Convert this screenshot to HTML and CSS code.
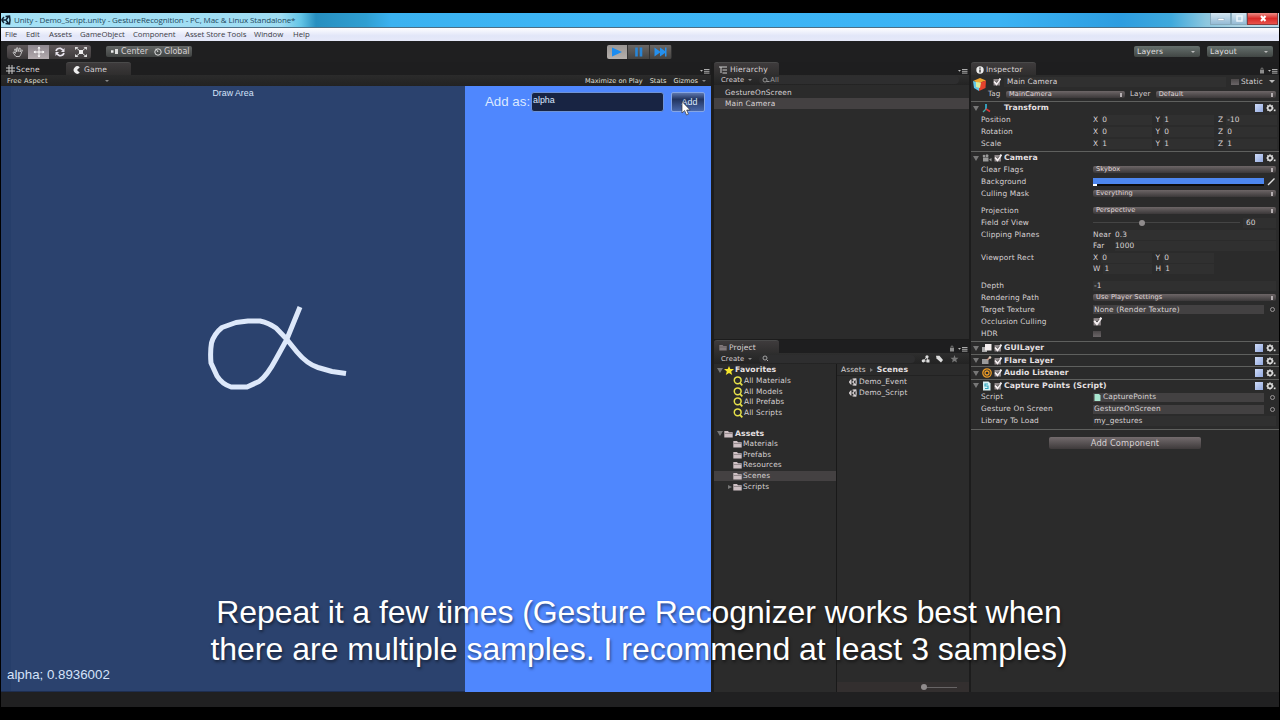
FILE: index.html
```html
<!DOCTYPE html>
<html lang="en">
<head>
  <meta charset="UTF-8">
  <title>Unity - Demo_Script.unity</title>
  <link rel="stylesheet" href="styles.css">
</head>
<body>

<!-- Icons -->
<svg class="sprite" width="0" height="0">
  <symbol id="i-unity" viewBox="0 0 10 10"><path d="M.5 5L3 2M.5 5L3 8M.5 5H5M5 5L7.500 1.500M5 5L7.500 8.500M4.500 1.500L8.500 1 9 5 8.500 9 4.500 8.500" fill="none" stroke="currentColor" stroke-width="1.500"/></symbol>
  <symbol id="i-check" viewBox="0 0 8 8"><rect x=".5" y="1" width="6.500" height="6.500" fill="#8f888a"/><path d="M1.200 3.300L3.500 6.200 7.500.6" fill="none" stroke="#f4eef0" stroke-width="2"/><path d="M2.300 3L3.600 4.500 5.500 1.800" fill="none" stroke="#333" stroke-width=".7"/></symbol>
  <symbol id="i-gear" viewBox="0 0 10 8"><circle cx="4" cy="4" r="2.300" fill="none" stroke="#ddd" stroke-width="1.600"/><path d="M4 .3V1.500M4 6.500V7.700M.3 4H1.500M6.500 4H7.700M1.400 1.400L2 2M6 2L6.600 1.400M1.400 6.600L2 6" stroke="#ddd" stroke-width="1.200"/><rect x="7.800" y="5.500" width="1.700" height="1.700" fill="#ddd"/></symbol>
  <symbol id="i-folder" viewBox="0 0 9 8"><path d="M.3 1H4L5 2.200H8.700V7.400H.3Z" fill="#cdbfc3"/><path d="M.8 3.500H8.500" stroke="#7d7376" stroke-width=".7"/></symbol>
  <symbol id="i-search" viewBox="0 0 10 10"><circle cx="4.700" cy="4.300" r="3.400" fill="none" stroke="#e6e14a" stroke-width="1.500"/><path d="M7 6.800L9.300 9.300" stroke="#e6e14a" stroke-width="1.700"/></symbol>
  <symbol id="i-menu" viewBox="0 0 10 6"><path d="M0 2H3L1.500 3.800Z" fill="#bbb"/><path d="M4 1.500H9.500M4 3.300H9.500M4 5.100H9.500" stroke="#bbb" stroke-width=".9"/></symbol>
  <symbol id="i-lock" viewBox="0 0 6 7"><rect x="1" y="3" width="4" height="3.500" fill="#8b8b8b"/><path d="M2 3V1.500Q3 .3 4 1.500V3" fill="none" stroke="#8b8b8b" stroke-width=".8"/></symbol>
</svg>

<div class="window">
  <div class="titlebar">
    <svg class="logo" width="10" height="10"><use href="#i-unity"/></svg>
    <span class="title">Unity - Demo_Script.unity - GestureRecognition - PC, Mac &amp; Linux Standalone*</span>
    <div class="win-buttons">
      <span class="win-btn"><svg width="20" height="11" viewBox="0 0 20 11"><rect x="7" y="5.500" width="6" height="2" fill="#fff" stroke="#8aa5bb" stroke-width=".5"/></svg></span>
      <span class="win-btn small"><svg width="16" height="11" viewBox="0 0 16 11"><rect x="5" y="3" width="5" height="5" fill="none" stroke="#eef6fc" stroke-width="1.500"/></svg></span>
      <span class="win-btn close"><svg width="30" height="11" viewBox="0 0 30 11"><path d="M13 3L17.500 8M17.500 3L13 8" stroke="#fff" stroke-width="2"/></svg></span>
    </div>
  </div>

  <nav class="menubar">
    <span class="m-file">File</span><span class="m-edit">Edit</span><span class="m-assets">Assets</span><span class="m-go">GameObject</span><span class="m-comp">Component</span><span class="m-store">Asset Store Tools</span><span class="m-window">Window</span><span>Help</span>
  </nav>

  <div class="toolbar">
    <div class="tools">
      <span><svg width="12" height="12" viewBox="0 0 12 12"><path d="M3.500 10L1 6.500 1.800 6 3.500 7.300 2.600 3.200 3.500 3 4.600 5.800 4.700 1.800H5.700L6.200 5.600 7.400 2 8.300 2.300 8 6 9.700 3.700 10.400 4.200 8.700 8.500 7.500 10.500H4Z" fill="none" stroke="#ddd" stroke-width=".8"/></svg></span>
      <span class="active"><svg width="12" height="12" viewBox="0 0 12 12"><path d="M6 1V11M1 6H11" stroke="#fff" stroke-width="1"/><path d="M6 .5L7.500 2.500H4.500ZM6 11.500L7.500 9.500H4.500ZM.5 6L2.500 4.500V7.500ZM11.500 6L9.500 4.500V7.500Z" fill="#fff"/></svg></span>
      <span><svg width="12" height="12" viewBox="0 0 12 12"><path d="M2 5Q3 2 6.500 2.300L9 4M10 7Q9 10 5.500 9.700L3 8" fill="none" stroke="#e8e4ee" stroke-width="1.700"/><path d="M10.500 2V6H7ZM1.500 10V6H5Z" fill="#e8e4ee"/></svg></span>
      <span><svg width="12" height="12" viewBox="0 0 12 12"><path d="M1 1.500L11 10.500M11 1.500L1 10.500" stroke="#ddd" stroke-width="1"/><path d="M0 1H3.500L0 4ZM12 1H8.500L12 4ZM0 11H3.500L0 8ZM12 11H8.500L12 8Z" fill="#ddd"/><rect x="4" y="4" width="4" height="4" fill="#eee"/></svg></span>
    </div>
    <div class="pivot">
      <span><svg width="8" height="7" viewBox="0 0 8 7"><path d="M0 3.500H2.500" stroke="#eee" stroke-width="2.500"/><path d="M4 1H7V6H4Z" fill="#ddd"/></svg>Center</span>
      <span><svg width="8" height="8" viewBox="0 0 8 8"><circle cx="4" cy="4" r="3.200" fill="none" stroke="#ddd"/><path d="M4 4L2 .8" stroke="#ddd"/></svg>Global</span>
    </div>
    <div class="play">
      <span class="on"><svg width="20" height="14" viewBox="0 0 20 14"><path d="M5 2.500L15 7 5 11.500Z" fill="#1b8cf0"/></svg></span>
      <span><svg width="21" height="14" viewBox="0 0 21 14"><path d="M8.500 2.500V11.500M13 2.500V11.500" stroke="#2886d8" stroke-width="2.600"/></svg></span>
      <span><svg width="21" height="14" viewBox="0 0 21 14"><path d="M4.500 2.500L10 6.500V2.500L15 6V2.500H16.500V11.500H15V8L10 11.500V7.500L4.500 11.500Z" fill="#2490ee"/></svg></span>
    </div>
    <div class="layouts">
      <span class="drop">Layers<i></i></span>
      <span class="drop">Layout<i></i></span>
    </div>
  </div>

  <main class="workspace">
    <section class="game">
      <div class="tabs">
        <span class="tab plain"><svg width="9" height="9" viewBox="0 0 9 9"><path d="M3 0V9M6 0V9M0 3H9M0 6H9" stroke="#ccc"/></svg>Scene</span>
        <span class="tab game-tab"><svg width="8" height="8" viewBox="0 0 8 8"><path d="M6.800 1.200A3.700 3.700 0 1 0 6.800 6.800L4 4Z" fill="#eee"/></svg>Game</span>
        <svg class="panel-menu" width="10" height="6"><use href="#i-menu"/></svg>
      </div>
      <div class="game-bar">
        <span class="aspect">Free Aspect</span><i class="caret"></i>
        <span class="max">Maximize on Play</span><span class="stats">Stats</span><span class="gizmos">Gizmos</span><i class="caret"></i>
      </div>
      <div class="view">
        <div class="draw-area">
          <p class="area-label">Draw Area</p>
          <svg class="gesture" width="150" height="92" viewBox="200 300 150 92"><path d="M300 307L286.500 340 276 359Q267 376 259 381.500L247 387H231Q222 384 217 376L211 363Q210 352 211.500 343 214 334 222 327.500L236 322.500 248 321H260Q269 323 276 328L286.500 339 297 352Q307 364 318 367.500L332 371.500 346 373.500" fill="none" stroke="#dde8fa" stroke-width="5" stroke-linejoin="round"/></svg>
          <p class="result">alpha; 0.8936002</p>
        </div>
        <div class="controls">
          <span class="add-label">Add as:</span>
          <span class="add-input">alpha</span>
          <span class="add-btn">Add
            <svg class="cursor" width="10" height="15" viewBox="0 0 10 15"><path d="M1 .5V12L3.600 9.600 5.500 14 7.500 13.200 5.700 9H9.200Z" fill="#fff" stroke="#333" stroke-width=".7"/></svg>
          </span>
        </div>
      </div>
    </section>

    <div class="middle">
      <section class="hierarchy">
        <div class="tabs">
          <span class="tab"><svg width="9" height="8" viewBox="0 0 9 8"><path d="M0 1H8M3.500 4H8M3.500 7H8M2 1V7" stroke="#ccc"/></svg>Hierarchy</span>
          <svg class="panel-menu" width="10" height="6"><use href="#i-menu"/></svg>
        </div>
        <div class="search-bar"><span>Create</span><i class="caret"></i><span class="search"><svg width="8" height="7" viewBox="0 0 8 7"><circle cx="3" cy="3" r="2" fill="none" stroke="#999" stroke-width=".9"/><path d="M4.500 4.500H7.500" stroke="#999"/></svg>All</span></div>
        <div class="objects">
          <div>GestureOnScreen</div>
          <div class="selected">Main Camera</div>
        </div>
      </section>

      <section class="project">
        <div class="tabs">
          <span class="tab"><svg class="dim" width="8" height="7"><use href="#i-folder"/></svg>Project</span>
          <svg class="panel-menu lock" width="6" height="7"><use href="#i-lock"/></svg>
          <svg width="10" height="6"><use href="#i-menu"/></svg>
        </div>
        <div class="search-bar"><span>Create</span><i class="caret"></i><span class="search"><svg width="8" height="7" viewBox="0 0 8 7"><circle cx="3" cy="3" r="2" fill="none" stroke="#aaa" stroke-width=".9"/><path d="M4.500 4.500L6 6" stroke="#aaa"/></svg></span>
          <svg class="filters" width="38" height="8" viewBox="0 0 38 8"><path d="M5.800 1.800L2.500 6H7Z" fill="none" stroke="#ddd" stroke-width=".8"/><circle cx="6" cy="1.800" r="1.600" fill="#ddd"/><circle cx="2.300" cy="5.800" r="1.600" fill="#ddd"/><rect x="5.500" y="4.500" width="3" height="3" fill="#ddd"/><path d="M15 .7H18.500L22 5 20 7.600 15.500 3.500Z" fill="#ddd"/><path d="M33.500 0L34.500 2.800H37.500L35.200 4.700 36 7.600 33.500 6 31 7.600 31.800 4.700 29.500 2.800H32.500Z" fill="#777"/></svg>
        </div>
        <div class="browser">
          <div class="tree">
            <div class="node root"><i class="fold"></i><svg width="10" height="9" viewBox="0 0 10 9"><path d="M5 0L6.300 3.100H10L7.200 5.400 8.200 9 5 6.900 1.800 9 2.800 5.400 0 3.100H3.700Z" fill="#f5e52c"/></svg><b>Favorites</b></div>
            <div class="node"><svg width="10" height="10"><use href="#i-search"/></svg>All Materials</div>
            <div class="node"><svg width="10" height="10"><use href="#i-search"/></svg>All Models</div>
            <div class="node"><svg width="10" height="10"><use href="#i-search"/></svg>All Prefabs</div>
            <div class="node"><svg width="10" height="10"><use href="#i-search"/></svg>All Scripts</div>
            <div class="node root assets"><i class="fold"></i><svg width="9" height="8"><use href="#i-folder"/></svg><b>Assets</b></div>
            <div class="node"><svg width="9" height="8"><use href="#i-folder"/></svg>Materials</div>
            <div class="node"><svg width="9" height="8"><use href="#i-folder"/></svg>Prefabs</div>
            <div class="node"><svg width="9" height="8"><use href="#i-folder"/></svg>Resources</div>
            <div class="node selected"><svg width="9" height="8"><use href="#i-folder"/></svg>Scenes</div>
            <div class="node closed"><i class="fold right"></i><svg width="9" height="8"><use href="#i-folder"/></svg>Scripts</div>
          </div>
          <div class="files">
            <div class="crumbs">Assets<i class="fold right"></i><b>Scenes</b></div>
            <div class="file"><svg width="8" height="8"><use href="#i-unity"/></svg>Demo_Event</div>
            <div class="file"><svg width="8" height="8"><use href="#i-unity"/></svg>Demo_Script</div>
            <div class="zoom-bar"><span class="zoom"><i class="knob"></i></span></div>
          </div>
        </div>
      </section>
    </div>

    <section class="inspector">
      <div class="tabs">
        <span class="tab"><svg width="8" height="8" viewBox="0 0 8 8"><circle cx="4" cy="4" r="3.700" fill="#eee"/><path d="M4 1.500V2.700M4 3.500V6.500" stroke="#222" stroke-width="1.300"/></svg>Inspector</span>
        <svg class="panel-menu lock" width="6" height="7"><use href="#i-lock"/></svg>
        <svg width="10" height="6"><use href="#i-menu"/></svg>
      </div>
      <div class="object-head">
        <svg class="cube" width="14" height="14" viewBox="0 0 14 14"><path d="M0 3L7 0 13 2.500 6 5Z" fill="#f0a52e"/><path d="M0 3L6 5V13L1 10Z" fill="#62c8e8"/><path d="M6 5L13 2.500 12.500 10 6 13Z" fill="#e4432c"/><path d="M3 4L8 4.500 7 10 3 9Z" fill="#d9ec9c"/></svg>
        <div class="object-rows">
          <div class="name-row"><svg width="8" height="8"><use href="#i-check"/></svg><span class="object-name">Main Camera</span><i class="box"></i><span>Static</span><i class="caret big"></i></div>
          <div class="tag-row"><span class="tag-label">Tag</span><span class="select tag-select">MainCamera</span><span class="layer-label">Layer</span><span class="select layer-select">Default</span></div>
        </div>
      </div>

      <div class="component">
        <div class="head"><i class="fold"></i><svg width="10" height="9" viewBox="0 0 10 9"><path d="M4 0V5" stroke="#39c2e8" stroke-width="1.500"/><path d="M4 5L1 8" stroke="#4aa" stroke-width="1.300"/><path d="M4 5L8 7.500" stroke="#d33" stroke-width="1.500"/></svg><b class="no-check">Transform</b><i class="book"></i><svg width="10" height="8"><use href="#i-gear"/></svg></div>
        <div class="row"><label>Position</label><div class="vec"><span>X<em>0</em></span><span>Y<em>1</em></span><span>Z<em>-10</em></span></div></div>
        <div class="row"><label>Rotation</label><div class="vec"><span>X<em>0</em></span><span>Y<em>0</em></span><span>Z<em>0</em></span></div></div>
        <div class="row"><label>Scale</label><div class="vec"><span>X<em>1</em></span><span>Y<em>1</em></span><span>Z<em>1</em></span></div></div>
      </div>

      <div class="component camera">
        <div class="head"><i class="fold"></i><svg width="10" height="8" viewBox="0 0 10 8"><path d="M1 3.500H6.500V7.500H1Z" fill="#999"/><circle cx="2" cy="2" r="1.300" fill="#999"/><circle cx="5" cy="1.700" r="1.500" fill="#999"/><path d="M7 5.500L9.500 4V7.500Z" fill="#999"/></svg><svg width="8" height="8"><use href="#i-check"/></svg><b>Camera</b><i class="book"></i><svg width="10" height="8"><use href="#i-gear"/></svg></div>
        <div class="row"><label>Clear Flags</label><span class="select">Skybox</span></div>
        <div class="row"><label>Background</label><span class="color"><i></i></span><svg width="8" height="8" viewBox="0 0 8 8"><path d="M1 7L7.500.5" stroke="#ddd" stroke-width="1.300"/></svg></div>
        <div class="row"><label>Culling Mask</label><span class="select">Everything</span></div>
        <div class="row gap-top"><label>Projection</label><span class="select">Perspective</span></div>
        <div class="row"><label>Field of View</label><span class="slider"><i class="knob"></i></span><span class="fov">60</span></div>
        <div class="row"><label>Clipping Planes</label><span class="clip">Near<em>0.3</em></span></div>
        <div class="row short"><label></label><span class="clip">Far<em>1000</em></span></div>
        <div class="row"><label>Viewport Rect</label><div class="vec"><span>X<em>0</em></span><span>Y<em>0</em></span></div></div>
        <div class="row short"><label></label><div class="vec"><span>W<em>1</em></span><span>H<em>1</em></span></div></div>
        <div class="row gap-top"><label>Depth</label><span class="field">-1</span></div>
        <div class="row"><label>Rendering Path</label><span class="select">Use Player Settings</span></div>
        <div class="row"><label>Target Texture</label><span class="object-field">None (Render Texture)</span><i class="ring"></i></div>
        <div class="row"><label>Occlusion Culling</label><svg width="9" height="9"><use href="#i-check"/></svg></div>
        <div class="row"><label>HDR</label><i class="box"></i></div>
      </div>

      <div class="component">
        <div class="head"><i class="fold"></i><svg width="10" height="9" viewBox="0 0 10 9"><rect x="0" y="3" width="5" height="5" fill="#aaa"/><rect x="3" y="0" width="6.500" height="6.500" fill="#f4eeee"/></svg><svg width="8" height="8"><use href="#i-check"/></svg><b>GUILayer</b><i class="book"></i><svg width="10" height="8"><use href="#i-gear"/></svg></div>
      </div>
      <div class="component">
        <div class="head"><i class="fold"></i><svg width="10" height="9" viewBox="0 0 10 9"><rect x="0" y="3" width="6.500" height="5" fill="#9a9a9a"/><path d="M5 4L8 1.500" stroke="#c98" stroke-width="1.500"/><circle cx="8" cy="1.500" r="1.300" fill="#dcb"/></svg><svg width="8" height="8"><use href="#i-check"/></svg><b>Flare Layer</b><i class="book"></i><svg width="10" height="8"><use href="#i-gear"/></svg></div>
      </div>
      <div class="component">
        <div class="head"><i class="fold"></i><svg width="10" height="10" viewBox="0 0 10 10"><circle cx="5" cy="5" r="4.200" fill="none" stroke="#eb9a25" stroke-width="1.300"/><circle cx="5" cy="5" r="2" fill="none" stroke="#eb9a25" stroke-width="1.300"/></svg><svg width="8" height="8"><use href="#i-check"/></svg><b>Audio Listener</b><i class="book"></i><svg width="10" height="8"><use href="#i-gear"/></svg></div>
      </div>
      <div class="component last">
        <div class="head"><i class="fold"></i><svg width="10" height="10" viewBox="0 0 10 10"><path d="M1 .5H6.500L8.500 2.500V9.500H1Z" fill="#d8f0f4"/><path d="M6 3H3V5H6V7.500H3" fill="none" stroke="#2ea5bd" stroke-width="1.100"/></svg><svg width="8" height="8"><use href="#i-check"/></svg><b>Capture Points (Script)</b><i class="book"></i><svg width="10" height="8"><use href="#i-gear"/></svg></div>
        <div class="row"><label>Script</label><span class="object-field"><svg width="7" height="7" viewBox="0 0 7 7"><path d="M.5 0H5L6.500 1.500V7H.5Z" fill="#a8e6cf"/></svg>CapturePoints</span><i class="ring"></i></div>
        <div class="row"><label>Gesture On Screen</label><span class="object-field">GestureOnScreen</span><i class="ring"></i></div>
        <div class="row"><label>Library To Load</label><span class="field">my_gestures</span></div>
      </div>

      <div class="add-component">Add Component</div>
    </section>
  </main>

  <div class="statusbar"></div>
</div>

<p class="caption"><span class="line-1">Repeat it a few times (Gesture Recognizer works best when</span><br><span class="line-2">there are multiple samples. I recommend at least 3 samples)</span></p>

</body>
</html>
```
FILE: styles.css
```css
:root {
  --panel: #2b2b2b;
  --chrome: #1f1f20;
  --text: #d8d2d4;
  --field: #303030;
  --line: #5f605e;
}

* {
  margin: 0;
  padding: 0;
  box-sizing: border-box;
}

body {
  width: 1280px;
  height: 720px;
  overflow: hidden;
  background: #000;
  color: var(--text);
  font-family: "DejaVu Sans", Verdana, sans-serif;
  font-size: 7.4px;
  line-height: 10px;
  letter-spacing: 0.12px;
  white-space: nowrap;
}

svg {
  flex: none;
  display: block;
}

.sprite {
  position: absolute;
}

i, em {
  font-style: normal;
  flex: none;
}

.window {
  margin: 0 1px;
  padding-top: 13px;
  height: 707px;
  width: 1278px;
  display: flex;
  flex-direction: column;
}

/* Title and menu */
.titlebar {
  height: 15px;
  flex: none;
  display: flex;
  align-items: center;
  border-bottom: 1px solid #4c6f86;
  background: linear-gradient(90deg, #a5e2f6 0, #9edcf2 280px, #62c4e6 300px, #278fc0 315px, #2f9fd2 365px, #3bb2f0 390px, #3eb6f6 600px, #3bb3f4 1000px, #2d9de0 1120px, #3fa9dc 1170px, #8cc7df 1205px, #b9d9e6 1250px);
  color: #24495c;
  font: 8px/12px "Open Sans", sans-serif;
}

.logo {
  color: #123;
}

.title {
  margin-left: 3px;
  letter-spacing: -0.11px;
}

.win-buttons {
  margin-left: auto;
  align-self: flex-start;
  display: flex;
  margin-right: 1px;
}

.win-btn {
  width: 21px;
  height: 12px;
  border: 1px solid #87aabd;
  border-top: none;
  background: linear-gradient(#d4e6f1, #96bcd6);
}

.win-btn.small {
  width: 16px;
}

.win-btn.close {
  width: 31px;
  border-color: #8d3b3b;
  background: linear-gradient(#ec8d86, #d92a27 50%, #e8534b);
}

.menubar {
  height: 13px;
  flex: none;
  display: flex;
  align-items: center;
  padding-left: 4px;
  background: linear-gradient(#fdfdff, #e2e6f8 60%, #e6e9f9);
  color: #3d3d46;
  font: 7.8px/13px "Open Sans", sans-serif;
  letter-spacing: -0.05px;
}

.m-file { width: 21px; }
.m-edit { width: 23px; }
.m-assets { width: 31px; }
.m-go { width: 53px; }
.m-comp { width: 52px; }
.m-store { width: 69px; }
.m-window { width: 39px; }

/* Toolbar */
.toolbar {
  height: 21px;
  flex: none;
  display: flex;
  align-items: center;
  padding-left: 6px;
  background: var(--chrome);
}

.tools {
  display: flex;
  border-radius: 3px;
  overflow: hidden;
}

.tools span {
  width: 21px;
  height: 14px;
  display: flex;
  align-items: center;
  justify-content: center;
  background: linear-gradient(#5e5759, #3c393a);
}

.tools .active {
  background: linear-gradient(#8d868e, #b3abae);
}

.pivot {
  display: flex;
  margin-left: 15px;
  height: 11px;
  border-radius: 2px;
  background: linear-gradient(#636665, #404342);
  font-size: 8px;
  letter-spacing: 0;
  line-height: 11px;
}

.pivot span {
  display: flex;
  align-items: center;
  gap: 2px;
  width: 43px;
  padding-left: 5px;
}

.play {
  display: flex;
  margin-left: 415px;
  border-radius: 2px;
  overflow: hidden;
}

.play span {
  background: linear-gradient(#6a6664, #454341);
  border-right: 1px solid #333;
}

.play .on {
  background: linear-gradient(#9a9694, #b5b0ac);
}

.layouts {
  margin-left: auto;
  display: flex;
  gap: 7px;
  padding-right: 6px;
}

.drop {
  display: flex;
  align-items: center;
  justify-content: space-between;
  width: 66px;
  height: 11px;
  padding: 0 5px 0 3px;
  border-radius: 2px;
  background: linear-gradient(#66706d, #414644);
  color: #ddd;
  font-size: 7.7px;
}

.drop i, .caret {
  border: 2px solid transparent;
  border-top: 2.500px solid #bbb;
  border-bottom: none;
}

.caret {
  border-width: 2px 2px 0;
  border-top-color: #888;
}

/* Panels */
.workspace {
  flex: 1;
  display: flex;
  min-height: 0;
  background: #1c1c1c;
}

.tabs {
  height: 13px;
  flex: none;
  display: flex;
  align-items: center;
  background: #1e1e1f;
  font-size: 7.6px;
  padding-right: 1px;
}

.tab {
  display: flex;
  align-items: center;
  gap: 2px;
  height: 13px;
  width: 65px;
  padding-left: 5px;
  padding-top: 1px;
  border-top: 1px solid #4a4a4a;
  border-radius: 3px 3px 0 0;
  background: linear-gradient(#3e3b3c, #2f2e2e);
}

.tab.plain {
  background: none;
  border-color: transparent;
  gap: 1px;
}

.panel-menu {
  margin: 4px 0 0 auto;
}

.panel-menu + svg {
  margin: 4px 0 0 3px;
}

.game {
  width: 710px;
  display: flex;
  flex-direction: column;
}

.game-tab {
  gap: 3px;
  padding-left: 7px;
}

.game-bar {
  height: 11px;
  flex: none;
  display: flex;
  align-items: center;
  padding: 0 5px 0 6px;
  background: linear-gradient(#2b2b2b, #222);
  font-size: 6.6px;
  letter-spacing: 0.02px;
  color: #e2e0d8;
}

.aspect {
  letter-spacing: 0.2px;
}

.game-bar .caret:nth-child(2) {
  margin-left: 57px;
}

.max { margin-left: auto; }
.stats { margin-left: 7px; }
.gizmos { margin: 0 4px 0 7px; }

.view {
  flex: 1;
  display: flex;
}

.draw-area {
  width: 464px;
  display: flex;
  flex-direction: column;
  background: linear-gradient(90deg, #263e6a 10px, #2b426e 10px);
  border-bottom: 1px solid #1e2e50;
  color: #d5e3fa;
  font-family: "Liberation Sans", Arial, sans-serif;
  letter-spacing: 0;
}

.area-label {
  margin-top: 2px;
  text-align: center;
  font-size: 8.8px;
}

.gesture {
  margin: 202px 0 0 199px;
}

.result {
  margin: auto 0 7px 6px;
  font-size: 13.3px;
  line-height: 18px;
}

.controls {
  flex: 1;
  display: flex;
  align-items: flex-start;
  padding: 6px 6px 0 20px;
  background: #4f87fe;
  color: #dce9ff;
  font-family: "Liberation Sans", Arial, sans-serif;
  letter-spacing: 0;
}

.add-label {
  width: 46px;
  font-size: 13.3px;
  line-height: 19px;
}

.add-input {
  width: 133px;
  height: 20px;
  padding: 2px 1px;
  border: 1px solid #6f93d6;
  border-radius: 3px;
  background: #182443;
  font-size: 8.9px;
}

.add-btn {
  position: relative;
  width: 34px;
  height: 20px;
  margin-left: 7px;
  padding-left: 3px;
  border: 1px solid #86a6e4;
  border-radius: 2px;
  background: linear-gradient(#5d76ad, #22345f 35%, #4968aa);
  text-align: center;
  font-size: 8.9px;
  line-height: 19px;
}

.cursor {
  position: absolute;
  left: 9px;
  top: 8px;
}

/* Hierarchy and project */
.middle {
  width: 255px;
  margin-left: 3px;
  display: flex;
  flex-direction: column;
}

.hierarchy {
  height: 277px;
  background: var(--panel);
}

.search-bar {
  height: 11px;
  display: flex;
  align-items: center;
  padding-left: 7px;
  background: linear-gradient(#2e2e2e, #232323);
  font-size: 6.8px;
}

.search-bar .caret {
  margin: 0 7px 0 4px;
}

.hierarchy .search-bar {
  height: 10px;
}

.search {
  display: flex;
  align-items: center;
  width: 200px;
  height: 8px;
  padding-left: 3px;
  border-radius: 4px;
  background: #2e2e2f;
  color: #999;
}

.objects {
  padding-top: 2px;
  line-height: 11px;
}

.objects div {
  padding-left: 11px;
}

.selected {
  background: #444142;
}

.project {
  flex: 1;
  margin-top: 1px;
  display: flex;
  flex-direction: column;
  background: var(--panel);
}

.dim {
  opacity: 0.5;
}

.project .search {
  width: 156px;
}

.filters {
  margin-left: 6px;
}

.browser {
  flex: 1;
  display: flex;
}

.tree {
  width: 123px;
  padding-top: 1px;
  border-right: 1px solid #191919;
}

.node {
  display: flex;
  align-items: center;
  gap: 1px;
  height: 10.650px;
  padding-left: 19px;
}

.node.root {
  padding-left: 3px;
  font-size: 7.7px;
}

.node.assets {
  margin-top: 10px;
}

.node.assets b {
  margin-left: 1px;
}

.node.closed {
  padding-left: 14px;
}

b {
  color: #e6e0e2;
}

.fold {
  border: 3px solid transparent;
  border-top: 5px solid #777;
  border-bottom: none;
}

.fold.right {
  border: 2.500px solid transparent;
  border-left: 4px solid #777;
  border-right: none;
}

.files {
  flex: 1;
  display: flex;
  flex-direction: column;
}

.crumbs {
  display: flex;
  align-items: center;
  height: 12px;
  padding-left: 4px;
  border-bottom: 1px solid #222;
}

.crumbs .fold {
  margin: 0 4px;
  border-width: 2px 0 2px 3px;
}

.crumbs b {
  font-size: 7.7px;
}

.file {
  display: flex;
  align-items: center;
  gap: 2px;
  height: 10.700px;
  padding-left: 12px;
}

.crumbs + .file {
  margin-top: 1px;
}

.zoom-bar {
  margin-top: auto;
  height: 10px;
  display: flex;
  align-items: center;
  justify-content: flex-end;
  padding-right: 12px;
  background: #332f2f;
}

.zoom {
  display: flex;
  align-items: center;
  width: 36px;
  height: 1px;
  background: #676465;
}

.knob {
  width: 6px;
  height: 6px;
  border-radius: 3px;
  background: #8f8b8c;
}

/* Inspector */
.inspector {
  width: 308px;
  margin-left: 2px;
  background: var(--panel);
}

.object-head {
  display: flex;
  height: 26px;
  padding: 0 3px 0 2px;
}

.cube {
  margin-top: 3px;
}

.object-rows {
  flex: 1;
}

.name-row, .tag-row {
  display: flex;
  align-items: center;
  height: 13px;
}

.name-row {
  padding-left: 6px;
}

.object-name {
  width: 222px;
  margin: 0 5px 0 3px;
  padding-left: 3px;
  background: var(--field);
}

.box {
  width: 8px;
  height: 6px;
  background: linear-gradient(#4c4849, #6a6567);
}

.name-row .box {
  margin-right: 2px;
}

.caret.big {
  margin-left: 6px;
  border-width: 3px 3px 0;
  border-top-color: #bbb;
}

.tag-row {
  height: 12px;
  padding-left: 1px;
  font-size: 7.2px;
}

.tag-label {
  width: 18px;
}

.select {
  position: relative;
  flex: 1;
  height: 7px;
  padding-left: 3px;
  border-radius: 2px;
  background: linear-gradient(#6d6667, #3b3839);
  color: #e0dadc;
  font-size: 6.6px;
  line-height: 7px;
}

.select::after {
  content: "";
  position: absolute;
  right: 3px;
  top: 2px;
  width: 2px;
  height: 4px;
  background: #b5afb1;
}

.tag-select {
  flex: none;
  width: 119px;
}

.layer-label {
  margin: 0 5px;
}

.component {
  border-top: 1px solid var(--line);
  padding-bottom: 1.500px;
}

.component.camera {
  padding-bottom: 1.300px;
}

.component.camera ~ .component {
  padding-bottom: 0;
}

.component.camera ~ .last {
  padding-bottom: 1.500px;
  border-bottom: 1px solid var(--line);
}

.head {
  display: flex;
  align-items: center;
  gap: 2px;
  height: 11.500px;
  padding: 1px 3px 0 2px;
  font-size: 7.7px;
}

.head .fold + svg {
  margin-left: 1px;
}

.head .no-check {
  margin-left: 10px;
}

.book {
  width: 8px;
  height: 8px;
  margin-left: auto;
  margin-right: 1px;
  background: linear-gradient(135deg, #cfdcf8, #93a9df);
}

.row {
  display: flex;
  align-items: center;
  height: 12px;
  padding: 0 3px 0 10px;
}

.row.short {
  height: 11px;
}

.row.gap-top {
  margin-top: 5.200px;
}

.row label {
  width: 112px;
  flex: none;
}

.vec {
  display: flex;
  flex: 1;
  gap: 4px;
}

.vec span {
  display: flex;
  width: 58.500px;
}

.vec em {
  flex: 1;
  margin-left: 3px;
  padding-left: 1px;
  background: var(--field);
}

.color {
  width: 171px;
  height: 8px;
  margin-right: 3px;
  background: linear-gradient(#4d86ee 6px, #0c0c0c 6px);
  padding-top: 6px;
}

.color i {
  display: block;
  width: 4px;
  height: 2px;
  background: #fff;
}

.slider {
  display: flex;
  align-items: center;
  width: 147px;
  height: 1px;
  padding-left: 46px;
  background: #444;
}

.fov {
  margin-left: 3px;
  padding-left: 3px;
  flex: 1;
  background: var(--field);
}

.clip {
  display: grid;
  flex: 1;
  grid-template-columns: 22px 1fr;
}

.clip em {
  background: var(--field);
}

.field {
  flex: 1;
  padding-left: 1px;
  background: var(--field);
}

.object-field {
  display: flex;
  align-items: center;
  gap: 2px;
  width: 171px;
  height: 9px;
  padding-left: 1px;
  background: #434142;
}

.ring {
  width: 5px;
  height: 5px;
  margin-left: 6px;
  border: 1px solid #9a9697;
  border-radius: 50%;
}

.add-component {
  width: 152px;
  height: 12px;
  margin: 7px 0 0 78px;
  border-radius: 2px;
  background: linear-gradient(#736b6d, #3e3a3b);
  text-align: center;
  font-size: 8.300px;
  line-height: 13px;
}

.statusbar {
  height: 15px;
  flex: none;
  background: #202021;
}

/* Subtitle over the whole window */
.caption {
  position: absolute;
  left: 0;
  top: 594px;
  width: 1278px;
  text-align: center;
  color: #fff;
  font: 32px/37px "Liberation Sans", Arial, sans-serif;
  letter-spacing: 0;
  text-shadow: 1px 2px 3px rgba(0, 0, 0, 0.5);
}

.line-1 {
  letter-spacing: -0.08px;
}
```
